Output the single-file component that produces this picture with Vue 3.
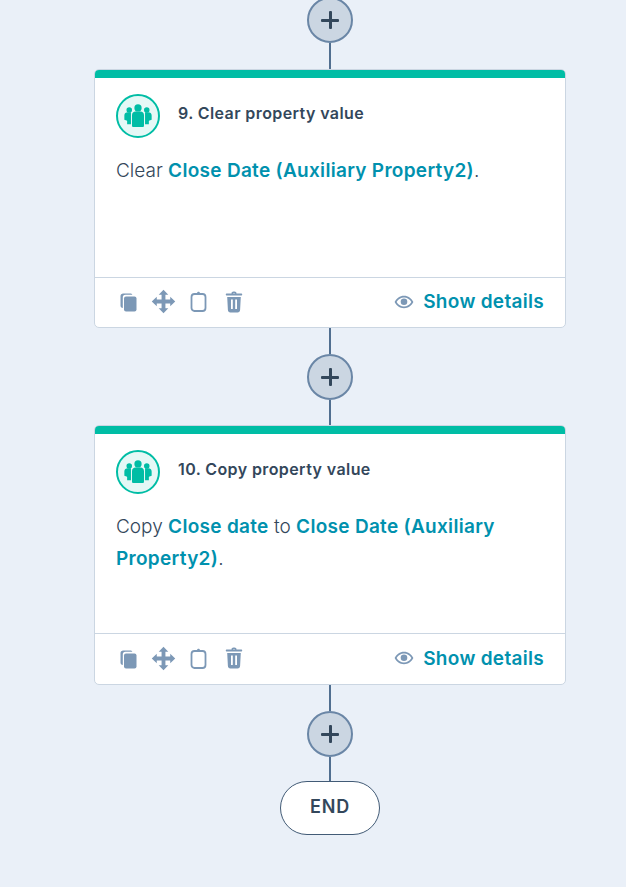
<template>
  <div class="flow">
    <template v-for="(step, i) in steps" :key="step.title">
      <div class="add" :class="{ first: i === 0 }"><span class="plus"></span></div>
      <div class="line" :class="{ short: i > 0 }"></div>
      <section class="card" :class="step.size">
        <header class="card-head">
          <span class="avatar">
            <svg width="32" height="32" viewBox="0 0 30 30">
              <circle cx="6.8" cy="9.4" r="2.6" />
              <path d="M2.200 14.500c0-1.700 1.400-2.900 3.200-2.900h3v11.200H4.800v-3.400l-2.600-1z" />
              <circle cx="23.200" cy="9.400" r="2.600" />
              <path d="M27.800 14.500c0-1.700-1.400-2.900-3.200-2.900h-3v11.200h3.600v-3.400l2.600-1z" />
              <circle cx="15" cy="7.400" r="3.400" />
              <path d="M9.400 14c0-2 1.400-3.300 3.300-3.300h4.600c1.900 0 3.300 1.300 3.300 3.300v10.200c0 .7-.5 1.200-1.200 1.200h-8.800c-.7 0-1.200-.5-1.200-1.200z" />
            </svg>
          </span>
          <h2>{{ step.title }}</h2>
        </header>
        <p class="desc">
          <template v-for="part in step.parts" :key="part.text">
            <b v-if="part.link">{{ part.text }}</b>
            <template v-else>{{ part.text }}</template>
          </template>
        </p>
        <footer class="card-foot">
          <div class="tools">
            <svg width="17" height="19" viewBox="0 0 17 19" class="tool copy">
              <path d="M3.200.4h7c1 0 1.800.5 2.200 1.400H5.400C3.700 1.800 2.800 2.800 2.800 4.400v10.700C1.400 14.800.5 13.800.5 12.400V3.100C.5 1.500 1.600.4 3.200.4z" />
              <rect x="4" y="3.500" width="12.500" height="15" rx="2" />
            </svg>
            <svg width="25" height="25" viewBox="0 0 26 26" class="tool">
              <path d="M13 .8l5 5.200h-3v5h5V8l5.200 5-5.200 5v-3h-5v5h3l-5 5.200-5-5.200h3v-5H6v3L.8 13 6 8v3h5V6H8z" />
            </svg>
            <svg width="17" height="21" viewBox="0 0 17 21" class="tool outline">
              <rect x="1.500" y="3" width="14" height="17" rx="3" />
              <path d="M5.500 4V2.800c0-.4.300-.8.800-.8h.7C7.300 1.200 7.800.7 8.500.7s1.200.5 1.500 1.300h.7c.5 0 .8.400.8.800V4z" />
            </svg>
            <svg width="18" height="22" viewBox="0 0 18 22" class="tool trash">
              <path d="M6.500 2.500C6.500 1.300 7.300.6 8.500.6h1c1.200 0 2 .7 2 1.900h4.700c.6 0 1 .4 1 1s-.4 1-1 1H1.800c-.6 0-1-.4-1-1s.4-1 1-1zm1.700 0h1.600c0-.3-.2-.4-.5-.4h-.6c-.3 0-.5.100-.5.400z" />
              <path fill-rule="evenodd" d="M2.200 6h13.600l-.7 13c-.1 1.500-1 2.400-2.500 2.400H5.400c-1.500 0-2.400-.9-2.500-2.400zm3.800 2.500v9.500h1.800V8.500zm4.200 0v9.500H12V8.500z" />
            </svg>
          </div>
          <a class="details">
            <svg width="20" height="14" viewBox="0 0 20 14">
              <path fill-rule="evenodd" d="M10 .8c4.200 0 7.600 2.600 9.400 6.200-1.800 3.600-5.200 6.200-9.400 6.200S2.400 10.600.6 7C2.400 3.400 5.800.8 10 .8zm0 1.700C7 2.500 4.300 4.200 2.600 7c1.700 2.800 4.400 4.500 7.400 4.500s5.700-1.700 7.400-4.500C15.700 4.200 13 2.500 10 2.500z" />
              <circle cx="10" cy="6.800" r="3.300" />
            </svg>
            Show details
          </a>
        </footer>
      </section>
      <div class="line"></div>
    </template>
    <div class="add"><span class="plus"></span></div>
    <div class="line last"></div>
    <div class="end">END</div>
  </div>
</template>

<script setup>
const steps = [
  {
    title: "9. Clear property value",
    size: "short",
    parts: [
      { text: "Clear " },
      { text: "Close Date (Auxiliary Property2)", link: true },
      { text: "." },
    ],
  },
  {
    title: "10. Copy property value",
    size: "tall",
    parts: [
      { text: "Copy " },
      { text: "Close date", link: true },
      { text: " to " },
      { text: "Close Date (Auxiliary Property2)", link: true },
      { text: "." },
    ],
  },
];
</script>

<style>
html,
body {
  margin: 0;
  background: #eaf0f8;
}
</style>

<style scoped>
.flow {
  box-sizing: border-box;
  width: 626px;
  height: 887px;
  padding-left: 34px;
  overflow: hidden;
  display: flex;
  flex-direction: column;
  align-items: center;
  background: #eaf0f8;
  font-family: Inter, "Noto Sans", sans-serif;
  color: #33475b;
}

.add {
  box-sizing: border-box;
  flex: none;
  width: 46px;
  height: 46px;
  border: 2px solid #6a86a6;
  border-radius: 50%;
  background: #cbd6e2;
  display: flex;
  align-items: center;
  justify-content: center;
}

.add.first {
  margin-top: -3px;
}

.plus {
  position: relative;
  width: 18px;
  height: 18px;
}

.plus::before,
.plus::after {
  content: "";
  position: absolute;
  background: #33475b;
  border-radius: 1px;
}

.plus::before {
  left: 0;
  right: 0;
  top: 8px;
  height: 2.5px;
}

.plus::after {
  top: 0;
  bottom: 0;
  left: 8px;
  width: 2.5px;
}

.line {
  flex: none;
  width: 2px;
  height: 26px;
  background: #516f90;
}

.line.short {
  height: 25px;
}

.line.last {
  height: 24px;
}

.card {
  box-sizing: border-box;
  flex: none;
  width: 472px;
  display: flex;
  flex-direction: column;
  background: #fff;
  border: 1px solid #cbd6e2;
  border-radius: 5px;
  overflow: hidden;
}

.card.short {
  height: 259px;
}

.card.tall {
  height: 260px;
}

.card.tall .card-foot {
  height: 51px;
}

.card::before {
  content: "";
  flex: none;
  height: 8px;
  background: #00bda5;
}

.card-head {
  display: flex;
  align-items: center;
  gap: 18px;
  padding: 16px 21px 0;
}

.avatar {
  box-sizing: border-box;
  flex: none;
  width: 44px;
  height: 44px;
  border: 2px solid #00bda5;
  border-radius: 50%;
  background: #e5f8f6;
  display: flex;
  align-items: center;
  justify-content: center;
}

.avatar svg {
  fill: #00bda5;
}

h2 {
  margin: 0 0 7px;
  font-size: 16px;
  font-weight: 600;
  letter-spacing: 0.4px;
  line-height: 20px;
  color: #33475b;
}

.desc {
  flex: 1;
  margin: 0;
  padding: 17px 21px 0;
  font-size: 19px;
  font-weight: 300;
  line-height: 32px;
  color: #33475b;
}

.desc b {
  font-weight: 600;
  letter-spacing: 0.3px;
  color: #0091ae;
}

.card-foot {
  box-sizing: border-box;
  flex: none;
  height: 50px;
  border-top: 1px solid #cbd6e2;
  display: flex;
  align-items: center;
  justify-content: space-between;
  padding: 0 21px 2px 25px;
}

.tools {
  display: flex;
  align-items: center;
  gap: 14px;
}

.tool {
  fill: #7c98b6;
}

.tool.copy {
  margin-top: 2px;
}

.tool.trash {
  margin-left: 4px;
}

.tool.outline rect {
  fill: none;
  stroke: #7c98b6;
  stroke-width: 1.8;
}

.details {
  display: flex;
  align-items: center;
  gap: 9px;
  font-size: 19px;
  font-weight: 600;
  letter-spacing: 0.3px;
  color: #0091ae;
}

.details svg {
  fill: #7c98b6;
}

.end {
  box-sizing: border-box;
  flex: none;
  width: 100px;
  height: 54px;
  padding-bottom: 3px;
  border: 1px solid #425b76;
  border-radius: 27px;
  background: #fff;
  display: flex;
  align-items: center;
  justify-content: center;
  font-size: 18px;
  font-weight: 600;
  letter-spacing: 0.8px;
  color: #33475b;
}
</style>
